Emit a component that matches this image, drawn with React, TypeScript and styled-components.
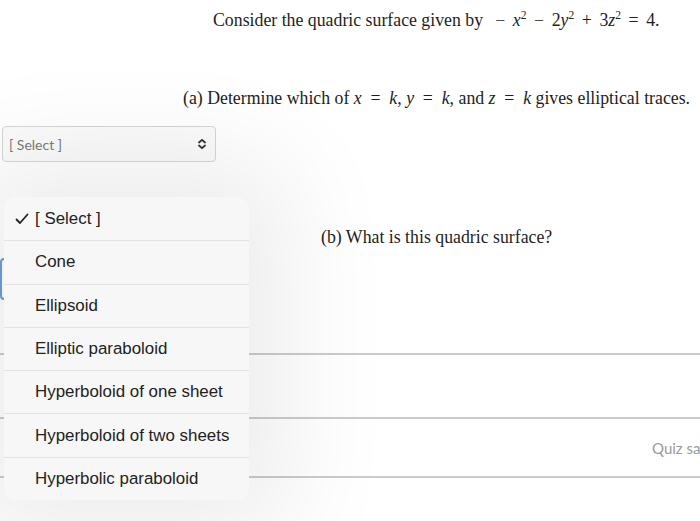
import React from "react";
import styled, { createGlobalStyle } from "styled-components";

const GlobalStyle = createGlobalStyle`
  html, body {
    margin: 0;
    padding: 0;
    background: #ffffff;
  }
  body {
    width: 700px;
    height: 521px;
    overflow: hidden;
  }
`;

const Page = styled.div`
  position: relative;
  width: 700px;
  height: 521px;
  overflow: hidden;
  background: #ffffff;
  display: flex;
  flex-direction: column;
`;

const Question = styled.p<{ $indent: number; $top: number }>`
  margin: ${(p) => p.$top}px 0 0 0;
  padding-left: ${(p) => p.$indent}px;
  font-family: "Liberation Serif", "Times New Roman", serif;
  font-size: 17.8px;
  line-height: 20px;
  color: #1e1e1e;
  white-space: nowrap;
`;

const Var = styled.i`
  font-style: italic;
`;

const Sup = styled.sup`
  font-size: 11.5px;
  line-height: 0;
  vertical-align: 7px;
`;

const Op = styled.span<{ $gap?: number }>`
  padding: 0 ${(p) => p.$gap ?? 7.6}px;
`;

const SelectBox = styled.div`
  margin: 18px 0 0 2px;
  width: 214px;
  height: 36px;
  box-sizing: border-box;
  border: 1px solid #d6d6d6;
  border-radius: 4px;
  background: #fbfbfb;
  display: flex;
  align-items: center;
  justify-content: space-between;
  padding: 0 8px 0 6px;
  font-family: Lato, "Liberation Sans", sans-serif;
  font-size: 14px;
  color: #7a7a7a;
`;

const FocusedSelect = styled.div`
  margin: 11px 0 0 0;
  width: 220px;
  height: 42px;
  box-sizing: border-box;
  border: 2px solid #6f9fd3;
  border-radius: 4px;
  background: #ffffff;
`;

const Rule = styled.div<{ $top: number }>`
  margin-top: ${(p) => p.$top}px;
  height: 2px;
  background: #cbcbcb;
`;

const StatusRow = styled.div`
  height: 57px;
  display: flex;
  align-items: center;
  padding-left: 652px;
  white-space: nowrap;
  font-family: Lato, "Liberation Sans", sans-serif;
  font-size: 15px;
  color: #9a9a9a;
`;

const Menu = styled.ul`
  position: absolute;
  left: 4px;
  top: 197px;
  width: 245px;
  margin: 0;
  padding: 0;
  list-style: none;
  background: #f7f7f7;
  border-radius: 12px;
  overflow: hidden;
  box-shadow: 0 0 110px 40px rgba(0, 0, 0, 0.075);
  z-index: 2;
`;

const MenuItem = styled.li`
  position: relative;
  height: 43.3px;
  display: flex;
  align-items: center;
  padding-left: 31px;
  font-family: "Liberation Sans", Arial, sans-serif;
  font-size: 16.9px;
  color: #222222;
  & + & {
    border-top: 1px solid #e2e2e2;
    box-sizing: border-box;
  }
`;

const Check = styled.span`
  position: absolute;
  left: 11px;
  top: 50%;
  transform: translateY(-50%);
  display: flex;
`;

const Chevrons = () => (
  <svg width="10" height="12" viewBox="0 0 10 12" fill="none">
    <path d="M2 4.5 L5 1.8 L8 4.5" stroke="#333" strokeWidth="1.8" strokeLinecap="round" strokeLinejoin="round" />
    <path d="M2 7.5 L5 10.2 L8 7.5" stroke="#333" strokeWidth="1.8" strokeLinecap="round" strokeLinejoin="round" />
  </svg>
);

const CheckMark = () => (
  <svg width="14" height="12" viewBox="0 0 14 12" fill="none">
    <path d="M1.5 6.5 L5 10 L12.5 1.5" stroke="#222" strokeWidth="1.8" strokeLinecap="round" strokeLinejoin="round" />
  </svg>
);

const options = [
  "[ Select ]",
  "Cone",
  "Ellipsoid",
  "Elliptic paraboloid",
  "Hyperboloid of one sheet",
  "Hyperboloid of two sheets",
  "Hyperbolic paraboloid",
];

export default function App() {
  return (
    <Page>
      <GlobalStyle />
      <Question $indent={213} $top={10}>
        Consider the quadric surface given by <Op>−</Op>
        <Var>x</Var>
        <Sup>2</Sup>
        <Op>−</Op>2<Var>y</Var>
        <Sup>2</Sup>
        <Op>+</Op>3<Var>z</Var>
        <Sup>2</Sup>
        <Op>=</Op>4.
      </Question>
      <Question $indent={183} $top={58}>
        (a) Determine which of <Var>x</Var>
        <Op $gap={8.8}>=</Op>
        <Var>k</Var>, <Var>y</Var>
        <Op $gap={8.8}>=</Op>
        <Var>k</Var>, and <Var>z</Var>
        <Op $gap={8.8}>=</Op>
        <Var>k</Var> gives elliptical traces.
      </Question>
      <SelectBox>
        <span>[ Select ]</span>
        <Chevrons />
      </SelectBox>
      <Question $indent={321} $top={65}>
        (b) What is this quadric surface?
      </Question>
      <FocusedSelect />
      <Rule $top={53} />
      <Rule $top={62} />
      <StatusRow>Quiz saved at 8:41pm</StatusRow>
      <Rule $top={0} />

      <Menu>
        {options.map((opt, i) => (
          <MenuItem key={opt}>
            {i === 0 && (
              <Check>
                <CheckMark />
              </Check>
            )}
            {opt}
          </MenuItem>
        ))}
      </Menu>
    </Page>
  );
}
